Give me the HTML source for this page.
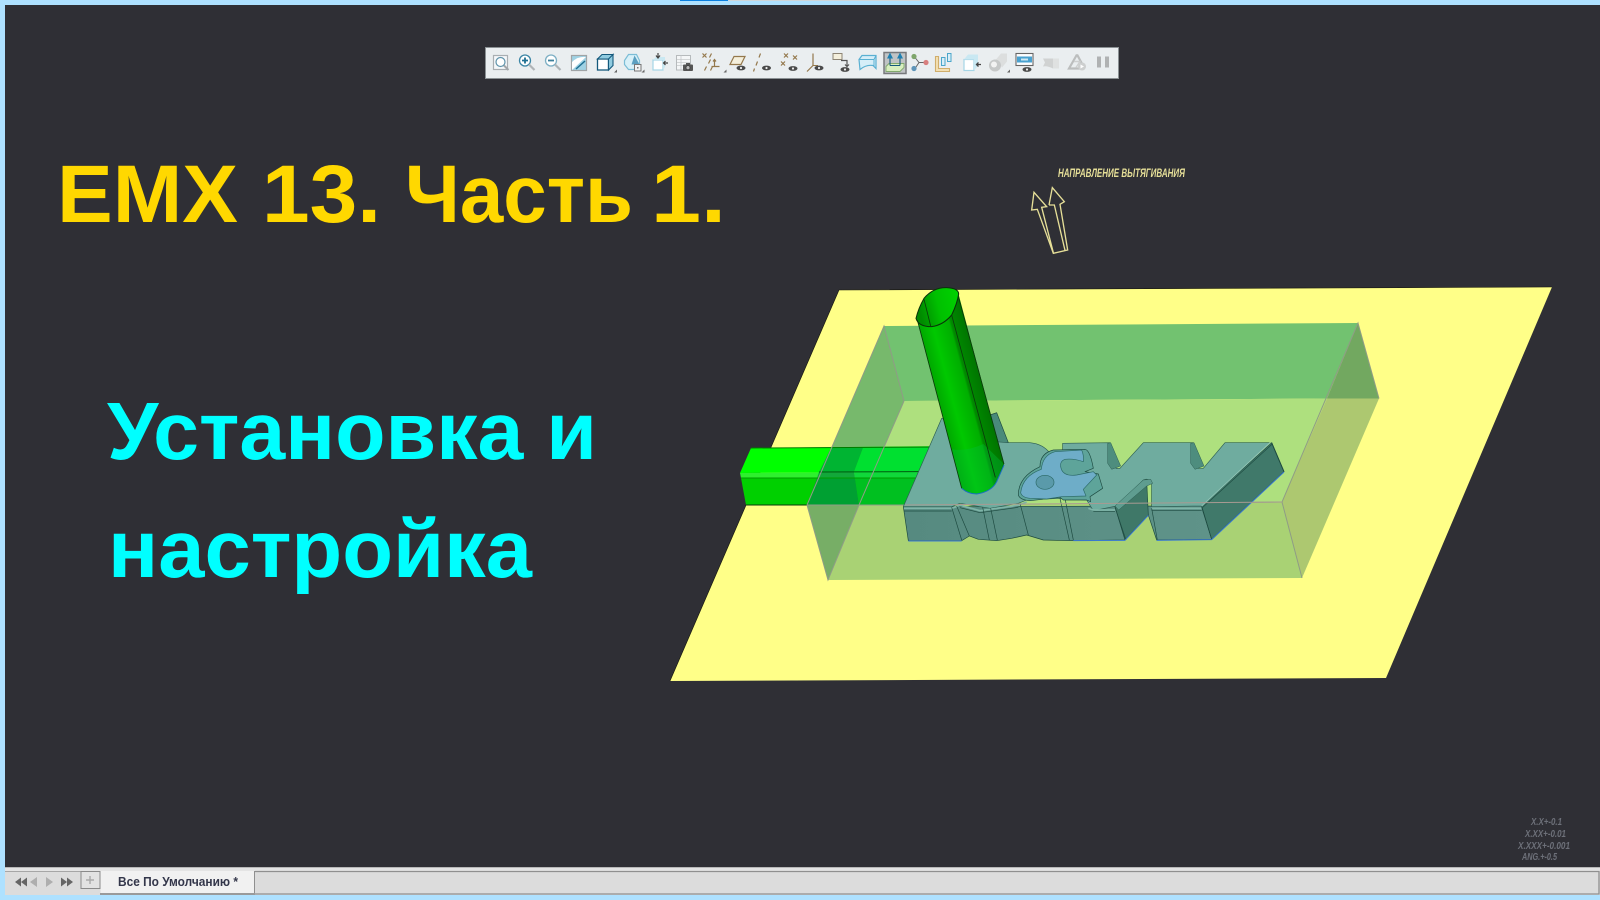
<!DOCTYPE html>
<html><head><meta charset="utf-8"><title>EMX 13</title>
<style>html,body{margin:0;padding:0;background:#2f2f35;width:1600px;height:900px;overflow:hidden}svg{display:block}text{font-family:"Liberation Sans","Noto Sans CJK SC",sans-serif}</style></head>
<body>
<svg width="1600" height="900" viewBox="0 0 1600 900" xmlns="http://www.w3.org/2000/svg">
<defs>
<linearGradient id="cyl" gradientUnits="userSpaceOnUse" x1="590" y1="165" x2="740" y2="125">
<stop offset="0" stop-color="#00a400"/><stop offset=".3" stop-color="#00c800"/><stop offset=".62" stop-color="#00ae00"/><stop offset=".66" stop-color="#008a00"/><stop offset="1" stop-color="#006f00"/></linearGradient>
<linearGradient id="cap" gradientUnits="userSpaceOnUse" x1="600" y1="130" x2="715" y2="100">
<stop offset="0" stop-color="#008a00"/><stop offset=".5" stop-color="#00c000"/><stop offset="1" stop-color="#00d000"/></linearGradient>
<linearGradient id="fr" x1="0" y1="0" x2="1" y2="0"><stop offset="0" stop-color="#568a80"/><stop offset="1" stop-color="#5f9389"/></linearGradient>
</defs>
<rect width="1600" height="900" fill="#2f2f35"/>
<rect width="1600" height="5" fill="#aee1ff"/>
<rect x="0" width="5" height="900" fill="#aee1ff"/>
<rect x="680" width="48" height="1" fill="#0a7fe0"/>
<rect x="728" width="192" height="1" fill="#cfd6da"/>

<!-- plane -->
<polygon points="839,290 1552,287 1386,678 670,681" fill="#ffff88"/>
<polyline points="670,681 839,290 1552,287" fill="none" stroke="#15150a" stroke-width=".6"/>
<!-- box -->
<polygon points="884,326 1358,323 1327,398.5 904,401" fill="#72c270"/>
<polygon points="904,401 1327,398.5 1282,502 807,505" fill="#aee07e"/>
<polygon points="807,505 1282,502 1302,578 828,580" fill="#a9d274"/>
<polygon points="1358,323 1379,398.5 1327,398.5" fill="#72a860"/>
<polygon points="1327,398.5 1379,398.5 1302,578 1282,502" fill="#adc870"/>
<polygon points="884,326 904,401 859,505 807,505" fill="#77b96c"/>
<polygon points="807,505 859,505 828,580" fill="#77ae66"/>
<!-- runner -->
<polygon points="751,448 950,446 940,472 740,473" fill="#00ff00"/>
<polygon points="740,473 940,472 935,478 741,478" fill="#2ef02e"/>
<polygon points="741,478 935,478 910,505 746,505" fill="#00d000"/>
<polygon points="831,448 863,448 854,472 819,472" fill="#00b432"/>
<polygon points="819,472 854,472 855,478 817,478" fill="#12a83a"/>
<polygon points="817,478 855,478 859,505 807,505" fill="#00a032"/>
<polygon points="863,448 950,446 940,472 854,472" fill="#00e030"/>
<polygon points="854,472 940,472 935,478 855,478" fill="#10d83a"/>
<polygon points="855,478 935,478 910,505 859,505" fill="#00c020"/>
<line x1="819" y1="472" x2="940" y2="471.500" stroke="#005a10" stroke-width="1"/>
<line x1="741" y1="478" x2="930" y2="478" stroke="#009a00" stroke-width="1"/>
<line x1="746" y1="505" x2="807" y2="505" stroke="#0a3a0a" stroke-width="1"/>
<line x1="751" y1="448" x2="940" y2="447" stroke="#007a00" stroke-width="1"/>
<!-- box edges -->
<g stroke="#8f9c86" stroke-width="1" fill="none">
<polyline points="807,505 884,326 904,401"/>
<polyline points="904,401 859,505 828,580 807,505"/>
<polyline points="1379,398.5 1358,323 1282,502 1302,578"/>
<line x1="807" y1="505" x2="905" y2="505"/>
<line x1="1282" y1="502" x2="1170" y2="503"/>
</g>

<!-- part (zoom coords) -->
<g transform="translate(880 400) scale(.33333)" stroke-linejoin="round">
<polygon points="330,45 350,38 385,128 355,128" fill="#4a8a7a" stroke="#1d4a40" stroke-width="2"/>
<path d="M70,320 L85,422 L245,422 L268,408 L295,418 L350,422 L395,415 L440,405 L490,420 L570,422 L735,420 L805,345 L830,420 L995,418 L965,318 Z" fill="url(#fr)" stroke="#1d4a40" stroke-width="2"/>
<polygon points="965,318 995,418 1212,215 1175,128" fill="#40796a" stroke="#1d4a40" stroke-width="2"/>
<polygon points="705,320 735,420 805,345 800,240" fill="#3f7868" stroke="#1d4a40" stroke-width="2"/>
<path d="M70,320 L185,55 L330,50 L345,125 L385,128 L450,128 Q490,132 510,160 L548,160 L548,130 L690,128 L695,180 Q700,210 720,205 L790,128 L940,128 L940,190 Q945,210 970,205 L1035,128 L1170,128 L965,318 L815,320 L815,250 Q805,232 790,240 L710,318 L640,332 L620,300 L540,295 L440,300 L415,310 L330,325 L240,310 L215,320 Z" fill="#6fac9f" stroke="#2c5d52" stroke-width="2"/>
<polygon points="683,130 692,128 722,198 695,208 683,190" fill="#4e8d7e" stroke="#2c5d52" stroke-width="1.500"/>
<polygon points="932,130 942,128 972,198 945,208 932,190" fill="#4e8d7e" stroke="#2c5d52" stroke-width="1.500"/>
<polygon points="705,318 790,240 812,238 818,250 800,258 716,330" fill="#5f9d90" stroke="#2c5d52" stroke-width="1.500"/>
<path d="M72,325 L215,325 L240,316 L300,332 L415,316 L440,306" fill="none" stroke="#7fb5a8" stroke-width="5"/>
<path d="M625,325 L640,330 L705,330 M815,325 L965,325" fill="none" stroke="#7fb5a8" stroke-width="5"/>
<path d="M72,333 L215,333 M240,323 L300,338 L415,322 M640,335 L705,335 M815,332 L965,332" fill="none" stroke="#1d4a40" stroke-width="2"/>
<path d="M965,318 L1170,128" fill="none" stroke="#8fc4b6" stroke-width="3"/>
<path d="M968,322 L1177,132" fill="none" stroke="#1d4a40" stroke-width="2"/>
<path d="M215,322 L245,420 M230,318 L268,408 M308,322 L328,420 M332,325 L352,420 M420,310 L445,405 M540,295 L568,420 M555,295 L580,420 M705,322 L738,420 M815,325 L832,420 M965,322 L995,418" fill="none" stroke="#1d4a40" stroke-width="2"/>
<path d="M415,285 Q415,230 480,200 Q480,160 520,150 L615,148 Q630,150 640,205 L615,215 L655,222 L668,265 L630,290 L632,305 L620,300 L550,300 L540,292 L450,302 Q420,300 415,285 Z" fill="#5ea49a" stroke="#1d4a40" stroke-width="2"/>
<path d="M422,278 Q428,228 484,208 Q488,165 525,155 L605,150 Q612,165 610,185 Q580,175 555,178 Q535,185 545,210 Q555,230 590,225 L640,215 L650,225 L610,268 L618,288 L545,290 L500,297 L450,295 Q425,292 422,278 Z" fill="#6eadc8" stroke="#2c6a68" stroke-width="2"/>
<ellipse cx="495" cy="247" rx="27" ry="21" fill="#5a9aaa" stroke="#2c6a68" stroke-width="2"/>
<path d="M85,423 L245,423 M580,422 L735,421 L805,346 M830,421 L995,419 L1212,216" fill="none" stroke="#3a7ad0" stroke-width="3"/>
<path d="M1175,128 L1212,215" fill="none" stroke="#1d4a40" stroke-width="3"/>
</g>
<line x1="905" y1="505" x2="1282" y2="502" stroke="#a89a92" stroke-width="1"/>

<!-- cylinder (zoom coords) -->
<g transform="translate(720 270) scale(.33333)" stroke-linejoin="round">
<path d="M590,145 L725,655 Q745,672 770,672 Q815,665 830,635 L852,585 L715,70 Z" fill="url(#cyl)"/>
<path d="M696,538 Q740,545 790,522 L850,580 L830,635 Q815,665 770,672 Q745,672 725,655 Z" fill="#00c040" fill-opacity=".32"/>
<path d="M588,145 Q595,115 612,85 Q640,52 680,53 Q716,55 716,72 Q712,100 695,135 Q670,165 635,170 Q595,170 588,145 Z" fill="url(#cap)" stroke="#0a300a" stroke-width="3"/>
<path d="M612,88 L632,168 M695,135 L826,622 M715,80 L852,582 M592,150 L725,655" fill="none" stroke="#0a3a0a" stroke-width="2.500"/>
<path d="M725,655 Q745,672 770,672 Q815,665 830,635 L852,585" fill="none" stroke="#1a70c0" stroke-width="3"/>
</g>

<!-- arrows -->
<g transform="translate(1010 155) scale(.33333)" fill="none" stroke="#e6df98" stroke-width="4" stroke-linejoin="miter">
<path d="M117,150 L127,98 L163,140 L150,148 L173,285 L130,295 L82,163 L65,165 L72,112 L110,155 L95,157 L130,293"/>
<path d="M117,150 L133,150 L165,286"/>
</g>
<text x="1058" y="177" font-size="12" font-weight="700" font-style="italic" fill="#e6df98" textLength="127" lengthAdjust="spacingAndGlyphs">НАПРАВЛЕНИЕ ВЫТЯГИВАНИЯ</text>

<!-- main text -->
<g font-size="82" font-weight="700" fill="#ffd800">
<text x="57" y="222" textLength="181" lengthAdjust="spacingAndGlyphs">EMX</text>
<text x="262" y="222" textLength="119" lengthAdjust="spacingAndGlyphs">13.</text>
<text x="405" y="222" textLength="228" lengthAdjust="spacingAndGlyphs">Часть</text>
<text x="651" y="222" textLength="75" lengthAdjust="spacingAndGlyphs">1.</text>
</g>
<text x="107" y="459" font-size="82" font-weight="700" fill="#00ffff" textLength="490" lengthAdjust="spacingAndGlyphs">Установка и</text>
<text x="108" y="577" font-size="82" font-weight="700" fill="#00ffff" textLength="424" lengthAdjust="spacingAndGlyphs">настройка</text>

<!-- tolerances -->
<g font-size="10.5" font-weight="700" font-style="italic" fill="#6d7079">
<text x="1531" y="825" textLength="31" lengthAdjust="spacingAndGlyphs">X.X+-0.1</text>
<text x="1525" y="837" textLength="41" lengthAdjust="spacingAndGlyphs">X.XX+-0.01</text>
<text x="1518" y="849" textLength="52" lengthAdjust="spacingAndGlyphs">X.XXX+-0.001</text>
<text x="1522" y="860" textLength="35" lengthAdjust="spacingAndGlyphs">ANG.+-0.5</text>
</g>

<!-- toolbar -->
<rect x="485.500" y="47.500" width="633" height="31" fill="#eaeef0" stroke="#8b9194"/>
<rect x="884" y="52.500" width="22" height="21" fill="#bfc3c5" stroke="#77797c" stroke-width="1.500"/>

<g transform="translate(500.500 63)"><rect x="-7" y="-7.500" width="14" height="14" fill="#f5f8fa" stroke="#a9aeb2" stroke-width="1.200"/><circle cx="0" cy="-1" r="4.500" fill="#fff" stroke="#5f93ab" stroke-width="1.200"/><line x1="3.500" y1="2.500" x2="8" y2="7" stroke="#a2a6a9" stroke-width="2"/></g>
<g transform="translate(526.500 62.500)"><circle cx="-1.500" cy="-2" r="5.500" fill="#fff" stroke="#3c86a6" stroke-width="1.300"/><path d="M-4.500,-2H1.500M-1.500,-5V1" stroke="#1d6f92" stroke-width="1.800"/><line x1="2.500" y1="2" x2="8" y2="7.500" stroke="#b0b4b7" stroke-width="2.200"/></g>
<g transform="translate(552.500 62.500)"><circle cx="-1.500" cy="-2" r="5.500" fill="#fff" stroke="#7dafc4" stroke-width="1.300"/><path d="M-4.500,-2H1.500" stroke="#3d7f9b" stroke-width="1.800"/><line x1="2.500" y1="2" x2="8" y2="7.500" stroke="#b0b4b7" stroke-width="2.200"/></g>
<g transform="translate(579 63)"><rect x="-7.500" y="-7.500" width="15" height="15" fill="#9fd2e4" stroke="#a0a4a6" stroke-width="1.200"/><path d="M-7,-1 Q-1,-7 7,-6 L-7,7 Z" fill="#fff"/><line x1="-3" y1="6" x2="6" y2="-2" stroke="#1d6f92" stroke-width="1.500"/></g>
<g transform="translate(605 62.500)"><rect x="-7.500" y="-3.500" width="11" height="11" fill="#fff" stroke="#14597c" stroke-width="1.300"/><path d="M-7.500,-3.500 L-3,-8 H8 L3.500,-3.500 Z M3.500,-3.500 L8,-8 V3 L3.500,7.500 Z" fill="#8fcbe0" stroke="#14597c" stroke-width="1.100"/><path d="M9,10 h3 v-3 z" fill="#666"/></g>
<g transform="translate(632.500 62.500)"><path d="M-8,-2 L-4,-8 H4 L7,-2 V4 L1,7 H-4 L-8,2 Z" fill="#d8f0f8" stroke="#7cbdd6" stroke-width="1.200"/><path d="M2,-7 L7,2 H-1 Z" fill="#5b9fc0"/><rect x="2" y="2" width="6.500" height="6.500" fill="#f2f2f2" stroke="#777" stroke-width="1"/><rect x="4.500" y="4.500" width="1.500" height="1.500" fill="#777"/><path d="M9,10 h3 v-3 z" fill="#666"/></g>
<g transform="translate(658 63)"><rect x="-5" y="-3" width="10" height="10" fill="#fff" stroke="#a5d5e6" stroke-width="1.200"/><path d="M-5,-3 L-2,-6 H7 L5,-3 Z M5,-3 L7,-6 V4 L5,7 Z" fill="#c9e8f2"/><path d="M0,-10 V-6 M-2,-7.500 L0,-5 L2,-7.500" stroke="#444" stroke-width="1.200" fill="none"/><path d="M10,0 H6 M7.500,-2 L5.500,0 L7.500,2" stroke="#444" stroke-width="1.200" fill="none"/></g>
<g transform="translate(685 62.500)"><rect x="-8.500" y="-7" width="14" height="14.500" fill="#f4f6f7" stroke="#b6babc"/><path d="M-8,-3H5M-8,0H5M-8,3H5M-4,-7V7" stroke="#c6cacc" stroke-width=".8"/><rect x="-2" y="2" width="10" height="6.500" rx="1" fill="#555"/><rect x="1" y=".5" width="4" height="2" fill="#555"/><circle cx="3" cy="5.200" r="2" fill="#bbb" stroke="#333" stroke-width=".7"/></g>
<g transform="translate(711.500 62.500)" stroke="#94784c" stroke-width="1.200" fill="none"><path d="M-9,-9 L-5,-5 M-5,-9 L-9,-5 M-2,-5 L0,-9 M-7,8 L-5,4 M-1,8 L1,4 M-3,1 L-1,-3"/><path d="M3,-3 V4 M0,4 H8 M1.500,-1 L3,-3 L4.500,-1"/><path d="M12,10 h3 v-3 z" fill="#666" stroke="none"/></g>
<g transform="translate(738 62.500)"><path d="M-8,2 L-4,-6 H7 L3,2 Z" fill="#f4efdc" stroke="#94784c" stroke-width="1.200"/><ellipse cx="3" cy="5.500" rx="4.500" ry="2.400" fill="#4a4a4a"/><circle cx="3" cy="5.500" r="1.100" fill="#eee"/></g>
<g transform="translate(763.500 62.500)" stroke="#94784c" stroke-width="1.200"><path d="M-3,-9 L-4.500,-5 M-6,-1 L-7.500,3 M-9,6 L-10,9"/><ellipse cx="3" cy="5.500" rx="4.500" ry="2.400" fill="#4a4a4a" stroke="none"/><circle cx="3" cy="5.500" r="1.100" fill="#eee" stroke="none"/></g>
<g transform="translate(790 62.500)" stroke="#94784c" stroke-width="1.200"><path d="M-6,-9 L-2,-5 M-2,-9 L-6,-5 M3,-7 L7,-3 M7,-7 L3,-3 M-9,-1 L-5,3 M-5,-1 L-9,3"/><ellipse cx="3" cy="6" rx="4.500" ry="2.400" fill="#4a4a4a" stroke="none"/><circle cx="3" cy="6" r="1.100" fill="#eee" stroke="none"/></g>
<g transform="translate(815 62.500)" fill="none"><path d="M-2,-9 V3 M-8,9 L-2,3" stroke="#94784c" stroke-width="1.200"/><path d="M-2,3 H3" stroke="#94784c"/><ellipse cx="4" cy="5.500" rx="4.500" ry="2.400" fill="#4a4a4a"/><circle cx="4" cy="5.500" r="1.100" fill="#eee"/></g>
<g transform="translate(843 62.500)"><rect x="-10" y="-9" width="9" height="6" fill="#f4efdc" stroke="#8d8474"/><path d="M-2,-2 H4 V4 M2,2 L4,4 L6,2" fill="none" stroke="#555" stroke-width="1.200"/><ellipse cx="2" cy="7" rx="4.500" ry="2.400" fill="#4a4a4a"/><circle cx="2" cy="7" r="1.100" fill="#eee"/></g>
<g transform="translate(868 62.500)"><path d="M-9,-3 L-6,-7 H8 V6 L5,3 Q-2,2 -8,7 Z" fill="#d6eef8" stroke="#5ab0d2" stroke-width="1.200"/><path d="M-9,-3 H6 L8,-7 M6,-3 V4" fill="none" stroke="#5ab0d2" stroke-width="1"/></g>
<g transform="translate(895 62.500)"><path d="M-9,4 L-6,1 H9 L9,5 L5,9 H-9 Z" fill="#d8efbf" stroke="#82a96e" stroke-width=".9"/><path d="M-5,3 V-5 M5,3 V-5 M-5,3 H5" fill="none" stroke="#14597c" stroke-width="1.100"/><path d="M-5,-10 L-8,-4 H-2 Z M5,-10 L2,-4 H8 Z" fill="#1d7fb0"/></g>
<g transform="translate(920 62.500)"><path d="M-5,-5 L-1,0 H5 M-1,0 L-5,6" fill="none" stroke="#666" stroke-width="1"/><circle cx="-6" cy="-6" r="2.600" fill="#7fa66c"/><circle cx="6" cy="0" r="2.600" fill="#d87f7f"/><circle cx="-6" cy="6" r="2.600" fill="#5e94b8"/></g>
<g transform="translate(944.500 62.500)"><path d="M-9,-6 V9 H5 V6 H-6 V-6 Z" fill="#f3e0b4" stroke="#d0ae6c" stroke-width="1.100"/><rect x="-3" y="-5" width="3.500" height="8" fill="#d8eef8" stroke="#4ba6ca"/><rect x="3" y="-9" width="3.500" height="8" fill="#d8eef8" stroke="#4ba6ca"/></g>
<g transform="translate(972 62.500)"><rect x="-8" y="-3" width="10" height="11" fill="#fff" stroke="#a5d5e6" stroke-width="1.200"/><path d="M-8,-3 L-4,-8 H6 L2,-3 Z M2,-3 L6,-8 V3 L2,8 Z" fill="#c9e8f2"/><path d="M9,2 H5 M6.500,0 L4.500,2 L6.500,4" stroke="#444" stroke-width="1.300" fill="none"/></g>
<g transform="translate(998 62.500)"><path d="M-2,-3 L3,-9 H9 V-1 L4,5 Z" fill="#dcdede"/><circle cx="-3" cy="3" r="6" fill="#c6c8c8"/><circle cx="-4" cy="2" r="3" fill="#f2f2f2"/><path d="M9,10 h3 v-3 z" fill="#666"/></g>
<g transform="translate(1025 62.500)"><rect x="-9" y="-9" width="17" height="12" fill="#fff" stroke="#666" stroke-width="1.100"/><rect x="-8" y="-6" width="15" height="6" fill="#4aa2d0"/><rect x="-4" y="-4" width="7" height="2" fill="#cfe8f2"/><ellipse cx="2" cy="7" rx="4.500" ry="2.400" fill="#4a4a4a"/><circle cx="2" cy="7" r="1.100" fill="#eee"/></g>
<g transform="translate(1051 62.500)"><path d="M-8,-4 H8 V6 H2 Q-4,3 -8,4 L-6,0 Z" fill="#d0d2d2"/><path d="M2,-4 H8 V6 H2 Z" fill="#dfe1e1"/></g>
<g transform="translate(1077 62.500)"><path d="M0,-8 L-8,6 H5" fill="none" stroke="#bcbebe" stroke-width="2.200"/><path d="M0,-8 L6,3" fill="none" stroke="#bcbebe" stroke-width="2.200"/><path d="M-3,-1 L3,-1 L-1,5" fill="none" stroke="#cdcfcf" stroke-width="1.400"/><circle cx="5" cy="4" r="4" fill="#cdcfcf"/><path d="M3.500,2 L7,4 L3.500,6 Z" fill="#fff"/></g>
<g transform="translate(1103 62.500)" fill="#b0b2b3"><rect x="-6" y="-6" width="4" height="11"/><rect x="2" y="-6" width="4" height="11"/></g>

<!-- bottom bar -->
<rect x="5" y="867" width="1595" height="1" fill="#b8b8b8"/>
<rect x="5" y="868" width="1595" height="3" fill="#e4e4e4"/>
<rect x="5" y="871" width="1595" height="24" fill="#dcdcdc"/>
<path d="M255,871.500 H1599 V894 H255" fill="none" stroke="#8f8f8f" stroke-width="1.300"/>
<path d="M5,871.500 H101" stroke="#a6a6a6" fill="none"/>
<rect x="0" y="895" width="1600" height="5" fill="#aee1ff"/>
<rect x="0" y="867" width="5" height="33" fill="#aee1ff"/>
<path d="M15,882 L21,877.500 V886.500 Z M21,882 L27,877.500 V886.500 Z" fill="#666"/>
<path d="M30,882 L37,877 V887 Z" fill="#aeaeae"/>
<path d="M53,882 L46,877 V887 Z" fill="#aeaeae"/>
<path d="M67,882 L61,877.500 V886.500 Z M73,882 L67,877.500 V886.500 Z" fill="#666"/>
<rect x="81" y="871.500" width="19" height="17" fill="#e2e2e2" stroke="#8a8a8a"/>
<path d="M90,876 V884 M86,880 H94" stroke="#aaa" stroke-width="1.400"/>
<rect x="100.500" y="871" width="154" height="22" fill="#f1f1f1"/>
<path d="M254.500,871 V894" stroke="#8f8f8f" fill="none"/>
<rect x="100" y="893" width="155" height="2" fill="#9a9a9a"/>
<text x="118" y="886" font-size="13" font-weight="700" fill="#33364a" textLength="120" lengthAdjust="spacingAndGlyphs">Все По Умолчанию *</text>
</svg>
</body></html>
